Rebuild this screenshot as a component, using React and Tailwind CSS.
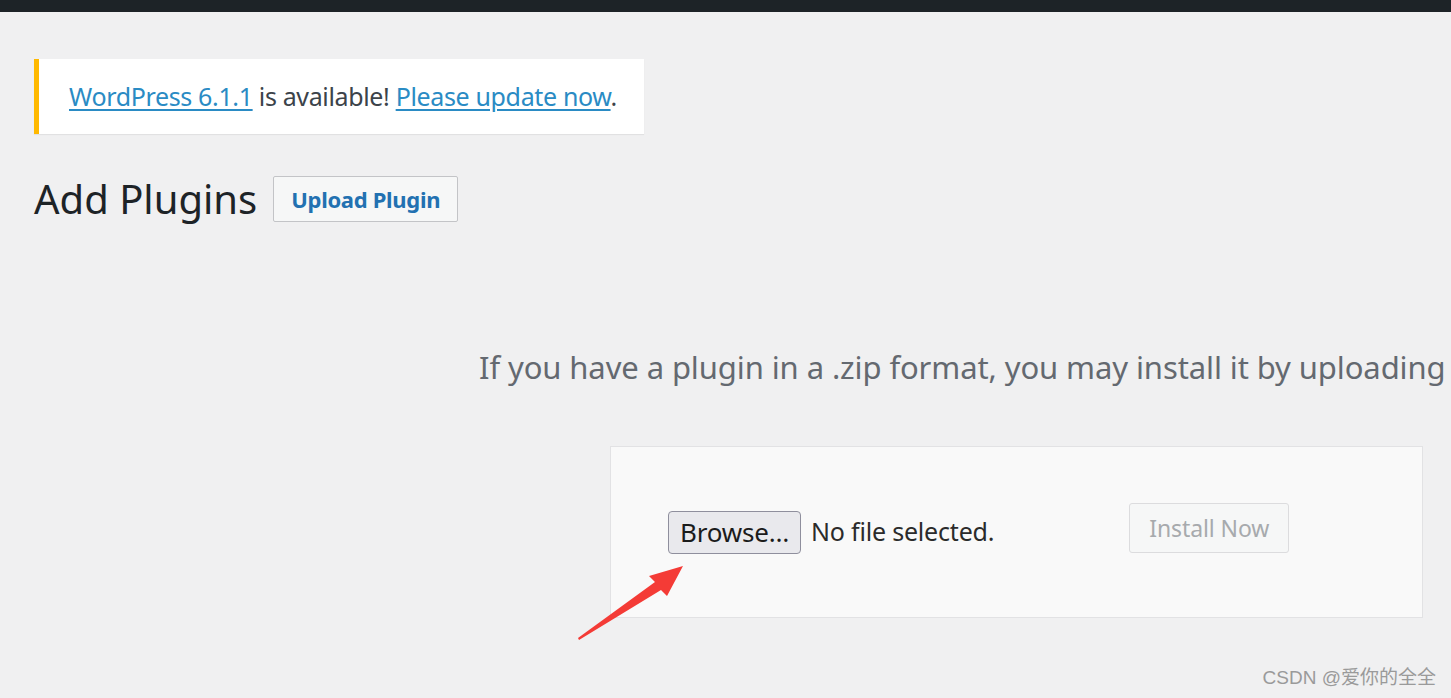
import React from 'react';

const font = { fontFamily: '"Noto Sans", "Open Sans", sans-serif' };

export default function App() {
  return (
    <div
      className="relative w-[1451px] h-[698px] overflow-hidden bg-[#f0f0f1] text-[#3c434a]"
      style={font}
    >
      <div className="h-[12px] bg-[#1d2327]" />

      <div className="pl-[34px] pt-[47px]">
        {/* update notice */}
        <div className="flex items-center w-[610px] h-[75px] bg-white border-l-[5px] border-[#ffb900] shadow-[0_1px_1px_rgba(0,0,0,0.06)] pl-[30px]">
          <p className="text-[25px] tracking-[-0.35px] whitespace-nowrap">
            <a href="#" className="text-[#2a8bc4] underline underline-offset-[3px]">
              WordPress 6.1.1
            </a>{' '}
            is available!{' '}
            <a href="#" className="text-[#2a8bc4] underline underline-offset-[3px]">
              Please update now
            </a>
            .
          </p>
        </div>

        {/* heading */}
        <div className="flex items-center gap-[16px] mt-[42px]">
          <h1 className="text-[40px] text-[#1d2327] leading-none">Add Plugins</h1>
          <button className="h-[46px] px-[17px] border border-[#c3c4c7] bg-[#f6f7f7] rounded-[2px] text-[22px] font-bold tracking-[-0.3px] text-[#2271b1]">
            Upload Plugin
          </button>
        </div>
      </div>

      {/* description */}
      <p className="mt-[130px] pl-[479px] whitespace-nowrap text-[31px] tracking-[-0.1px] text-[#646970] leading-none">
        If you have a plugin in a .zip format, you may install it by uploading
      </p>

      {/* upload form */}
      <div className="ml-[610px] mt-[63px] w-[813px] h-[172px] bg-[#f9f9f9] border border-[#e2e2e4] flex items-center pl-[57px]">
        <div className="flex items-center">
          <button className="h-[43px] px-[11px] bg-[#e9e9ed] border border-[#8f8f9d] rounded-[4px] text-[26px] tracking-[-0.2px] text-[#1b1b1b]">
            Browse…
          </button>
          <span className="ml-[10px] text-[25px] tracking-[-0.2px] text-[#2b2b2b]">No file selected.</span>
        </div>
        <button className="ml-[135px] mt-[-8px] h-[50px] px-[19px] bg-[#f6f7f7] border border-[#dcdcde] rounded-[3px] text-[23px] tracking-[-0.1px] text-[#a7aaad]">
          Install Now
        </button>
      </div>

      {/* annotation arrow */}
      <svg className="absolute left-0 top-0" width="1451" height="698" viewBox="0 0 1451 698">
        <polygon points="578,638 655,582 649,576 683,566 667,596 661,590 579,640" fill="#f43b36" />
      </svg>

      {/* watermark */}
      <div
        className="absolute right-[15px] bottom-[6px] text-[19px] text-[#9a9a9a]"
        style={{ fontFamily: '"Liberation Sans", "Noto Sans CJK SC", sans-serif' }}
      >
        CSDN @爱你的全全
      </div>
    </div>
  );
}
